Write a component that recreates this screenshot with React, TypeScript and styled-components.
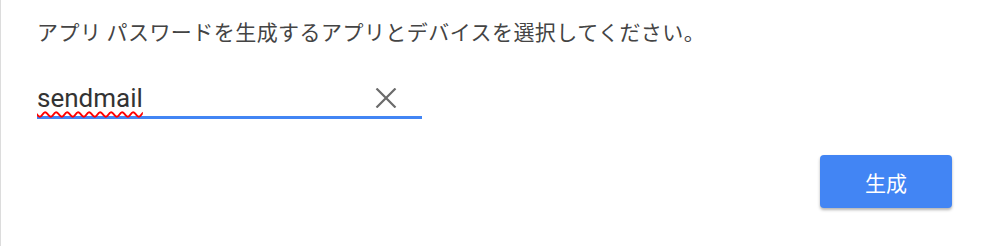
import React, { useState } from 'react'
import styled, { createGlobalStyle } from 'styled-components'

const GlobalStyle = createGlobalStyle`
  html, body {
    margin: 0;
    padding: 0;
    background: #fff;
  }
`

const Panel = styled.div`
  box-sizing: border-box;
  width: 983px;
  height: 246px;
  border-left: 1px solid #dcdcdc;
  padding: 17px 31px 0 36px;
  display: flex;
  flex-direction: column;
  font-family: 'Noto Sans CJK JP', 'Noto Sans', sans-serif;
`

const Prompt = styled.p`
  margin: 0;
  font-size: 21px;
  line-height: 28px;
  color: #444;
  letter-spacing: 0.45px;
`

const Field = styled.div`
  margin-top: 35px;
  width: 385px;
  height: 36px;
  display: flex;
  align-items: center;
  border-bottom: 3px solid #4285f4;
`

const Input = styled.span`
  flex: 1;
  font-family: Roboto, 'Liberation Sans', sans-serif;
  font-size: 26px;
  line-height: 36px;
  color: #333;
`

const Misspelled = styled.span`
  text-decoration: underline wavy #ff0000;
  text-decoration-thickness: 1.5px;
  text-underline-offset: 4px;
`

const ClearButton = styled.button`
  border: 0;
  background: none;
  padding: 0;
  margin-right: 25px;
  width: 22px;
  height: 22px;
  display: flex;
  align-items: center;
  justify-content: center;
  cursor: pointer;
`

const Actions = styled.div`
  margin-top: 36px;
  display: flex;
  justify-content: flex-end;
`

const PrimaryButton = styled.button`
  width: 132px;
  height: 53px;
  border: 0;
  border-radius: 4px;
  background: #4285f4;
  color: #fff;
  font-family: 'Noto Sans CJK JP', 'Noto Sans', sans-serif;
  font-size: 21px;
  box-shadow: 0 2px 3px rgba(0, 0, 0, 0.3);
  cursor: pointer;
`

export default function App() {
  const [value, setValue] = useState('sendmail')
  return (
    <>
      <GlobalStyle />
      <Panel>
        <Prompt>アプリ パスワードを生成するアプリとデバイスを選択してください。</Prompt>
        <Field>
          <Input>
            <Misspelled>{value}</Misspelled>
          </Input>
          <ClearButton onClick={() => setValue('')} aria-label="clear">
            <svg width="22" height="20" viewBox="0 0 22 20">
              <path d="M1.5 0.5 L20.5 19.5 M20.5 0.5 L1.5 19.5" stroke="#6b6b6b" strokeWidth="2.2" fill="none" />
            </svg>
          </ClearButton>
        </Field>
        <Actions>
          <PrimaryButton>生成</PrimaryButton>
        </Actions>
      </Panel>
    </>
  )
}
